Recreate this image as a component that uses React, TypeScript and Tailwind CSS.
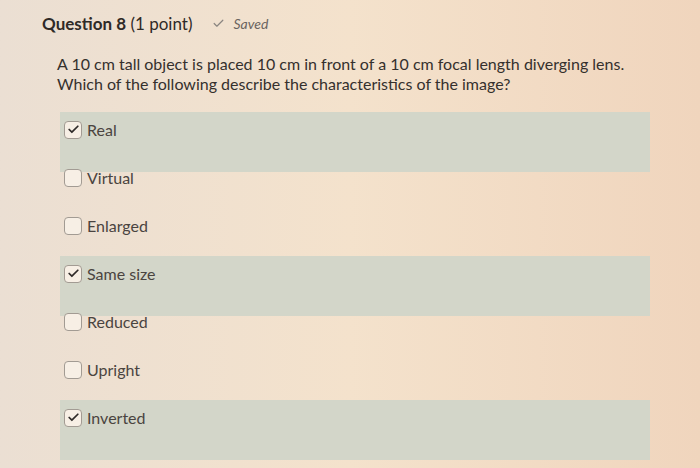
import { Check } from 'lucide-react';

const options = [
  { label: 'Real', checked: true },
  { label: 'Virtual', checked: false },
  { label: 'Enlarged', checked: false },
  { label: 'Same size', checked: true },
  { label: 'Reduced', checked: false },
  { label: 'Upright', checked: false },
  { label: 'Inverted', checked: true },
];

const Box = ({ checked }: { checked: boolean }) => (
  <span className="flex h-[18px] w-[18px] shrink-0 items-center justify-center rounded-[4px] border border-[#a29b93] bg-[#f7efe5]">
    {checked && <Check className="h-[13px] w-[13px] text-[#2f2b29]" strokeWidth={3.2} />}
  </span>
);

const App = () => {
  return (
    <div
      className="h-[468px] w-[700px] overflow-hidden bg-gradient-to-r from-[#ebdfd3] via-[#f4e2cc] to-[#f0d5bd] text-[#3b3532]"
      style={{ fontFamily: 'Lato, "Open Sans", sans-serif' }}
    >
      {/* Header */}
      <div className="flex items-baseline pl-[42px] pt-[11px]">
        <h2 className="text-[17px] text-[#2f2a27]">
          <span className="font-bold">Question 8</span> (1 point)
        </h2>
        <span className="ml-[20px] flex items-center gap-[8px] text-[14px] italic text-[#6a645f]">
          <Check className="h-[13px] w-[13px] text-[#8a8580]" strokeWidth={2.2} />
          Saved
        </span>
      </div>

      {/* Question text */}
      <p className="ml-[57px] mt-[17px] w-[600px] text-[16px] leading-[20px] text-[#35302d]">
        A 10 cm tall object is placed 10 cm in front of a 10 cm focal length diverging lens.
        <br />
        Which of the following describe the characteristics of the image?
      </p>

      {/* Options */}
      <div className="mt-[18px] flex flex-col">
        {options.map((o) => (
          <div key={o.label} className="h-[48px]">
            <div
              className={`ml-[60px] flex h-[60px] w-[590px] items-start pl-[4px] pt-[9px] ${
                o.checked ? 'bg-[#d3d6c9]' : ''
              }`}
            >
              <div className="flex items-center gap-[5px]">
                <Box checked={o.checked} />
                <span className="text-[16px] leading-[18px] text-[#4a4440]">{o.label}</span>
              </div>
            </div>
          </div>
        ))}
      </div>
    </div>
  );
};

export default App;
